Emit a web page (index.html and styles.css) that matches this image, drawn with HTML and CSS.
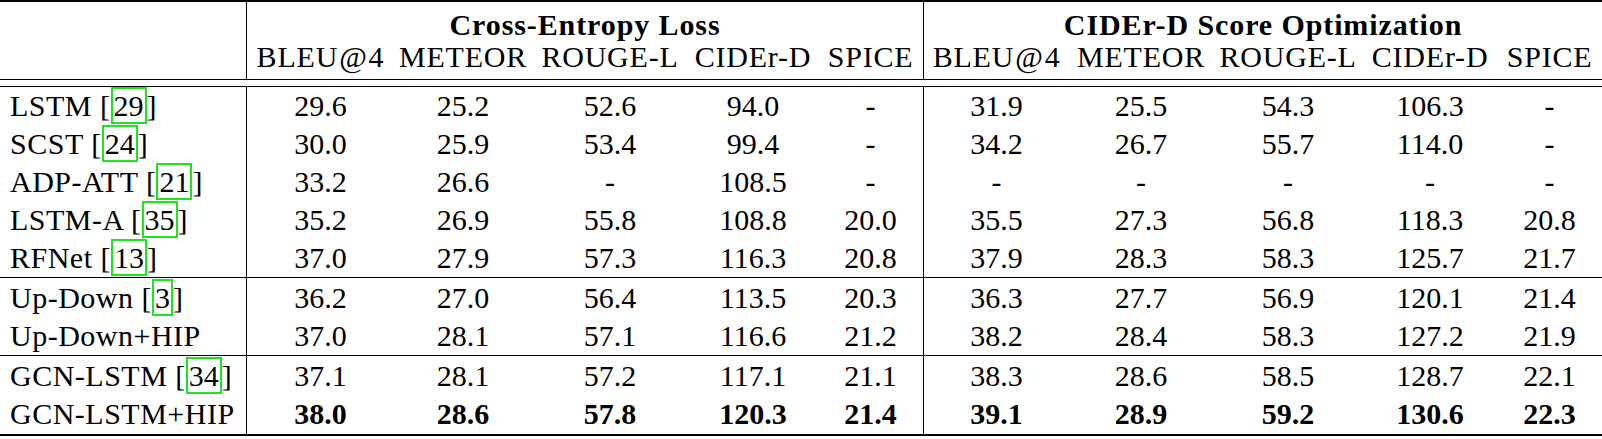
FILE: index.html
```html
<!DOCTYPE html>
<html lang="en">
<head>
  <meta charset="UTF-8" />
  <title>Captioning Results</title>
  <link rel="stylesheet" href="styles.css">
</head>
<body>

  <table class="results">
    <colgroup>
      <col class="c-name">
      <col class="c1"><col class="c2"><col class="c3"><col class="c4"><col class="c5">
      <col class="d1"><col class="d2"><col class="d3"><col class="d4"><col class="d5">
    </colgroup>
    <thead>
      <tr class="group-row">
        <th class="name"></th>
        <th colspan="5" class="split">Cross-Entropy Loss</th>
        <th colspan="5" class="split">CIDEr-D Score Optimization</th>
      </tr>
      <tr class="metric-row">
        <th class="name"></th>
        <th class="split">BLEU<span class="at">@</span>4</th><th>METEOR</th><th>ROUGE-L</th><th>CIDEr-D</th><th>SPICE</th>
        <th class="split">BLEU<span class="at">@</span>4</th><th>METEOR</th><th>ROUGE-L</th><th>CIDEr-D</th><th>SPICE</th>
      </tr>
      <tr class="gap"><td colspan="11"></td></tr>
    </thead>

    <tbody>
      <tr class="first">
        <td class="name">LSTM [<span class="cite">29</span>]</td>
        <td class="split">29.6</td><td>25.2</td><td>52.6</td><td>94.0</td><td>-</td>
        <td class="split">31.9</td><td>25.5</td><td>54.3</td><td>106.3</td><td>-</td>
      </tr>
      <tr>
        <td class="name">SCST [<span class="cite">24</span>]</td>
        <td class="split">30.0</td><td>25.9</td><td>53.4</td><td>99.4</td><td>-</td>
        <td class="split">34.2</td><td>26.7</td><td>55.7</td><td>114.0</td><td>-</td>
      </tr>
      <tr>
        <td class="name">ADP-ATT [<span class="cite">21</span>]</td>
        <td class="split">33.2</td><td>26.6</td><td>-</td><td>108.5</td><td>-</td>
        <td class="split">-</td><td>-</td><td>-</td><td>-</td><td>-</td>
      </tr>
      <tr>
        <td class="name">LSTM-A [<span class="cite">35</span>]</td>
        <td class="split">35.2</td><td>26.9</td><td>55.8</td><td>108.8</td><td>20.0</td>
        <td class="split">35.5</td><td>27.3</td><td>56.8</td><td>118.3</td><td>20.8</td>
      </tr>
      <tr>
        <td class="name">RFNet [<span class="cite">13</span>]</td>
        <td class="split">37.0</td><td>27.9</td><td>57.3</td><td>116.3</td><td>20.8</td>
        <td class="split">37.9</td><td>28.3</td><td>58.3</td><td>125.7</td><td>21.7</td>
      </tr>

      <tr class="block-start">
        <td class="name">Up-Down [<span class="cite">3</span>]</td>
        <td class="split">36.2</td><td>27.0</td><td>56.4</td><td>113.5</td><td>20.3</td>
        <td class="split">36.3</td><td>27.7</td><td>56.9</td><td>120.1</td><td>21.4</td>
      </tr>
      <tr>
        <td class="name">Up-Down+HIP</td>
        <td class="split">37.0</td><td>28.1</td><td>57.1</td><td>116.6</td><td>21.2</td>
        <td class="split">38.2</td><td>28.4</td><td>58.3</td><td>127.2</td><td>21.9</td>
      </tr>

      <tr class="block-start">
        <td class="name">GCN-LSTM [<span class="cite">34</span>]</td>
        <td class="split">37.1</td><td>28.1</td><td>57.2</td><td>117.1</td><td>21.1</td>
        <td class="split">38.3</td><td>28.6</td><td>58.5</td><td>128.7</td><td>22.1</td>
      </tr>
      <tr class="best last">
        <td class="name">GCN-LSTM+HIP</td>
        <td class="split">38.0</td><td>28.6</td><td>57.8</td><td>120.3</td><td>21.4</td>
        <td class="split">39.1</td><td>28.9</td><td>59.2</td><td>130.6</td><td>22.3</td>
      </tr>
    </tbody>
  </table>

</body>
</html>
```

FILE: styles.css
```css
* {
  margin: 0;
  padding: 0;
  box-sizing: border-box;
}

body {
  background: #fff;
  color: #000;
  font-family: "Liberation Serif", "Times New Roman", serif;
  font-size: 30px;
}

.results {
  width: 1602px;
  table-layout: fixed;
  border-collapse: separate;
  border-spacing: 0;
  border-top: 2px solid #000;
}

/* column widths, measured off the printed table */
.c-name { width: 246px; }
.c1 { width: 148px; }
.c2 { width: 138px; }
.c3 { width: 156px; }
.c4 { width: 130px; }
.c5 { width: 105px; }
.d1 { width: 146px; }
.d2 { width: 144px; }
.d3 { width: 150px; }
.d4 { width: 134px; }
.d5 { width: 105px; }

.results th,
.results td {
  padding: 0 2px;
  text-align: center;
  white-space: nowrap;
  font-weight: normal;
  line-height: 38px;
}

.results .name {
  text-align: left;
  padding-left: 10px;
  letter-spacing: 0.5px;
}

.split {
  border-left: 1px solid #000;
}

.group-row th {
  font-weight: bold;
  line-height: 30px;
  padding-top: 8px;
  letter-spacing: 0.9px;
}

.metric-row th {
  line-height: 34px;
  padding-bottom: 5px;
  border-bottom: 1px solid #000;
  letter-spacing: 0.8px;
}

.at {
  margin: 0 1px;
}

.gap td {
  height: 7px;
  line-height: 0;
  font-size: 0;
  padding: 0;
  border-bottom: 1px solid #000;
}

.block-start td {
  border-top: 1px solid #000;
  padding-top: 1px;
}

.best td {
  font-weight: bold;
}

.best td.name {
  font-weight: normal;
}

.last td {
  padding-bottom: 1px;
  border-bottom: 2px solid #000;
}

.cite {
  border: 2px solid #1ee31e;
  padding: 0 1px;
  letter-spacing: 0;
}
```
